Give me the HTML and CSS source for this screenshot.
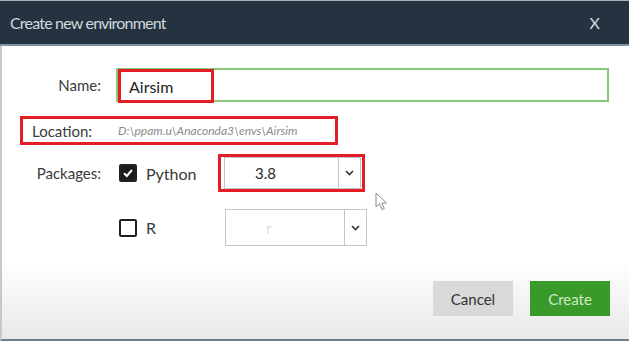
FILE: index.html
```html
<!DOCTYPE html>
<html>
<head>
    <meta charset="UTF-8" />
    <link rel="stylesheet" href="styles.css">
</head>
<body>
    <div class="dialog">
        <div class="titlebar">
            <span class="title">Create new environment</span>
            <span class="close">X</span>
        </div>

        <div class="content">
            <div class="row name-row">
                <span class="label">Name:</span>
                <div class="textbox">
                    <span class="mark name-mark">Airsim</span>
                </div>
            </div>

            <div class="mark location-row">
                <span class="loc-label">Location:</span>
                <span class="loc-value">D:\ppam.u\Anaconda3\envs\Airsim</span>
            </div>

            <div class="row pkg-row">
                <span class="label">Packages:</span>
                <span class="check checked">
                    <svg width="12" height="12" viewBox="0 0 12 12"><path d="M2 6.2 L4.8 9 L10 3" fill="none" stroke="#fff" stroke-width="2"/></svg>
                </span>
                <span class="pkg-name">Python</span>
                <div class="mark select-mark">
                    <div class="select">
                        <span class="select-value">3.8</span>
                        <span class="select-arrow">
                            <svg width="9" height="6" viewBox="0 0 9 6"><path d="M1 1 L4.5 4.5 L8 1" fill="none" stroke="#333" stroke-width="1.6"/></svg>
                        </span>
                    </div>
                </div>
            </div>

            <div class="row pkg-row r-row">
                <span class="label"></span>
                <span class="check"></span>
                <span class="pkg-name">R</span>
                <div class="select plain">
                    <span class="select-value faded">r</span>
                    <span class="select-arrow">
                        <svg width="9" height="6" viewBox="0 0 9 6"><path d="M1 1 L4.5 4.5 L8 1" fill="none" stroke="#333" stroke-width="1.6"/></svg>
                    </span>
                </div>
            </div>

            <div class="footer">
                <span class="btn cancel">Cancel</span>
                <span class="btn create">Create</span>
            </div>

            <svg class="cursor" width="14" height="20" viewBox="0 0 14 20">
                <path d="M1 1 L1 15 L4.5 11.8 L7 17.5 L9.3 16.5 L6.8 11 L11.5 11 Z" fill="#fff" stroke="#8a8a8a" stroke-width="1"/>
            </svg>
        </div>
    </div>
</body>
</html>
```

FILE: styles.css
```css
body {
    margin: 0;
    font-family: Lato, "Open Sans", sans-serif;
    background-color: white;
}

.dialog {
    width: 629px;
    height: 341px;
    display: flex;
    flex-direction: column;
    overflow: hidden;
}

.titlebar {
    height: 43px;
    background-color: #24333f;
    border-top: 1px solid #aab1b7;
    border-bottom: 2px solid #7d93a3;
    display: flex;
    align-items: center;
    justify-content: space-between;
    padding: 0 29px 0 10px;
    color: #d3d9de;
    font-size: 16px;
}

.title {
    letter-spacing: -0.8px;
}

.content {
    position: relative;
    flex: 1;
    border-left: 2px solid #c8c8c8;
    border-bottom: 2px solid #6b7f8e;
    background: linear-gradient(#ffffff 0px, #ffffff 215px, #e9e9e9 290px);
    padding-top: 22px;
}

.row {
    display: flex;
    align-items: center;
}

.label {
    width: 99px;
    text-align: right;
    color: #3a3a3a;
    font-size: 15px;
}

.mark {
    border: 3px solid #e41e26;
    box-sizing: border-box;
}

.textbox {
    margin-left: 15px;
    width: 493px;
    height: 34px;
    box-sizing: border-box;
    border: 2px solid #86c878;
    display: flex;
}

.name-mark {
    width: 96px;
    margin: -1px 0 0 0;
    height: 34px;
    display: flex;
    align-items: center;
    padding-left: 8px;
    font-size: 16px;
    color: #222;
}

.location-row {
    margin: 14px 0 0 18px;
    width: 318px;
    height: 29px;
    display: flex;
    align-items: center;
}

.loc-label {
    margin-left: 9px;
    width: 86px;
    color: #3a3a3a;
    font-size: 15px;
}

.loc-value {
    font-style: italic;
    font-size: 12px;
    color: #8a8a8a;
}

.pkg-row {
    margin-top: 9px;
    height: 38px;
}

.check {
    margin-left: 18px;
    width: 14px;
    height: 14px;
    border: 2px solid #222;
    border-radius: 2px;
    display: flex;
    align-items: center;
    justify-content: center;
}

.check.checked {
    background-color: #1c1c1c;
}

.pkg-name {
    margin-left: 9px;
    width: 72px;
    font-size: 16px;
    color: #3a3a3a;
}

.select-mark {
    width: 147px;
    height: 38px;
    padding: 0 1px 0 3px;
    display: flex;
    align-items: center;
}

.select {
    flex: 1;
    height: 32px;
    display: flex;
    border: 1px solid #c4c4c4;
    box-sizing: border-box;
    background-color: white;
}

.select.plain {
    flex: none;
    margin-left: 7px;
    width: 142px;
    height: 37px;
}

.select-value {
    flex: 1;
    display: flex;
    align-items: center;
    justify-content: center;
    padding-right: 32px;
    font-size: 15px;
    color: #2a2a2a;
}

.select-value.faded {
    color: #c4c4c4;
    font-weight: 300;
}

.select-arrow {
    width: 21px;
    border-left: 1px solid #c4c4c4;
    display: flex;
    align-items: center;
    justify-content: center;
}

.r-row {
    margin-top: 17px;
    height: 37px;
}

.footer {
    display: flex;
    justify-content: flex-end;
    gap: 17px;
    padding-right: 19px;
    margin-top: 35px;
}

.btn {
    width: 80px;
    height: 35px;
    display: flex;
    align-items: center;
    justify-content: center;
    font-size: 15px;
}

.cancel {
    background-color: #d9d9d9;
    color: #333;
}

.create {
    background-color: #3a9a29;
    color: #cdeac4;
}

.cursor {
    position: absolute;
    left: 373px;
    top: 146px;
}
```
